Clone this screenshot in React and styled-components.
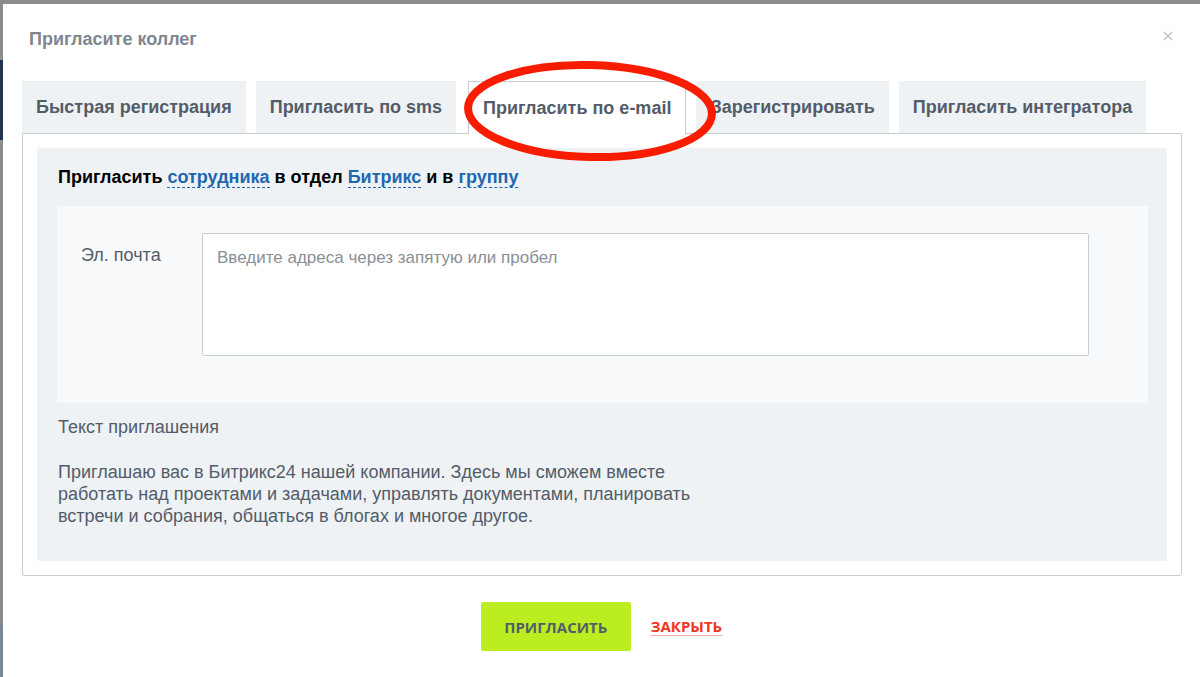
import React, { useState } from "react";
import styled, { createGlobalStyle } from "styled-components";

const GlobalStyle = createGlobalStyle`
  html, body {
    margin: 0;
    padding: 0;
    height: 100%;
    overflow: hidden;
  }
  body {
    font-family: "Liberation Sans", Arial, sans-serif;
    background: #8c8c8c;
  }
  #root {
    height: 100%;
  }
`;

const Backdrop = styled.div`
  display: flex;
  height: 677px;
  padding-top: 4px;
  box-sizing: border-box;
  background: #8c8c8c;
`;

const Edge = styled.div`
  display: flex;
  flex-direction: column;
  width: 3px;
  flex-shrink: 0;
`;

const EdgePart = styled.div`
  height: ${(p) => p.h}px;
  flex: ${(p) => (p.h ? "none" : "1")};
  background: ${(p) => p.color};
`;

const Modal = styled.div`
  position: relative;
  flex: 1;
  background: #fff;
  display: flex;
  flex-direction: column;
`;

const Header = styled.div`
  display: flex;
  align-items: center;
  justify-content: space-between;
  height: 77px;
  padding: 0 26px 6px 26px;
  box-sizing: border-box;
`;

const Title = styled.div`
  font-size: 18px;
  font-weight: bold;
  color: #80868e;
`;

const CloseX = styled.button`
  border: 0;
  background: none;
  padding: 0;
  width: 12px;
  height: 12px;
  margin-top: -8px;
  display: flex;
  cursor: pointer;
`;

const Tabs = styled.div`
  display: flex;
  gap: 10px;
  padding-left: 19px;
  height: 52px;
  position: relative;
  z-index: 1;
`;

const Tab = styled.div`
  display: flex;
  align-items: center;
  padding: 0 14px;
  box-sizing: border-box;
  height: ${(p) => (p.active ? "53px" : "52px")};
  font-size: 18px;
  font-weight: bold;
  color: #535c69;
  white-space: nowrap;
  background: ${(p) => (p.active ? "#fff" : "#eef2f4")};
  border: ${(p) => (p.active ? "1px solid #c6cdd3" : "none")};
  border-bottom: none;
  margin: ${(p) => (p.active ? "0 0 0 2px" : "0")};
  cursor: pointer;
`;

const ContentBox = styled.div`
  margin: 0 18px 0 19px;
  border: 1px solid #c6cdd3;
  border-radius: 0 0 2px 2px;
  padding: 14px;
`;

const Panel = styled.div`
  background: #eef2f4;
  border-radius: 2px;
  padding: 17px 19px 34px 20px;
`;

const Lead = styled.div`
  font-size: 18px;
  font-weight: bold;
  line-height: 24px;
  color: #000;
  padding-left: 1px;
  margin-bottom: 17px;
`;

const DashLink = styled.a`
  color: #2067b0;
  text-decoration: none;
  border-bottom: 1px dashed #2067b0;
  cursor: pointer;
`;

const FieldBox = styled.div`
  display: flex;
  background: #f8f9fa;
  padding: 27px 59px 47px 24px;
`;

const FieldLabel = styled.div`
  width: 121px;
  flex-shrink: 0;
  font-size: 18px;
  line-height: 20px;
  color: #535c69;
  margin-top: 12px;
`;

const Area = styled.textarea`
  flex: 1;
  height: 123px;
  box-sizing: border-box;
  border: 1px solid #c6cdd3;
  border-radius: 2px;
  padding: 14px 14px;
  font-family: "Liberation Sans", Arial, sans-serif;
  font-size: 17px;
  line-height: 20px;
  color: #333;
  resize: none;
  outline: none;
  background: #fff;
  &::placeholder {
    color: #8a8f94;
  }
`;

const Caption = styled.div`
  margin-top: 14px;
  padding-left: 1px;
  font-size: 18px;
  line-height: 20px;
  color: #535c69;
`;

const Message = styled.div`
  margin-top: 24px;
  padding-left: 1px;
  width: 660px;
  font-size: 18px;
  line-height: 22px;
  color: #535c69;
`;

const Footer = styled.div`
  display: flex;
  justify-content: center;
  align-items: center;
  gap: 20px;
  padding-top: 26px;
`;

const InviteButton = styled.button`
  width: 150px;
  height: 49px;
  border: 0;
  border-radius: 2px;
  background: #bbed21;
  color: #535c69;
  font-family: "Open Sans", sans-serif;
  font-weight: bold;
  font-size: 15px;
  text-transform: uppercase;
  cursor: pointer;
`;

const CloseLink = styled.a`
  font-family: "Open Sans", sans-serif;
  font-weight: bold;
  font-size: 15px;
  color: #f2361d;
  text-transform: uppercase;
  border-bottom: 1px solid #f7a79b;
  line-height: 18px;
  cursor: pointer;
`;

const Mark = styled.svg`
  position: absolute;
  left: 455px;
  top: 52px;
  z-index: 2;
  pointer-events: none;
`;

const tabs = [
  "Быстрая регистрация",
  "Пригласить по sms",
  "Пригласить по e-mail",
  "Зарегистрировать",
  "Пригласить интегратора",
];

export default function App() {
  const [active, setActive] = useState(2);

  return (
    <>
      <GlobalStyle />
      <Backdrop>
        <Edge>
          <EdgePart h={56} color="#8c8c8c" />
          <EdgePart h={80} color="#23324f" />
          <EdgePart h={485} color="#8c8c8c" />
          <EdgePart color="#7a8796" />
        </Edge>
        <Modal>
          <Header>
            <Title>Пригласите коллег</Title>
            <CloseX aria-label="close">
              <svg width="12" height="12" viewBox="0 0 12 12">
                <path
                  d="M2 2 L10 10 M10 2 L2 10"
                  stroke="#c3c6c9"
                  strokeWidth="1.6"
                />
              </svg>
            </CloseX>
          </Header>
          <Tabs>
            {tabs.map((t, i) => (
              <Tab key={t} active={i === active} onClick={() => setActive(i)}>
                {t}
              </Tab>
            ))}
          </Tabs>
          <ContentBox>
            <Panel>
              <Lead>
                Пригласить <DashLink>сотрудника</DashLink> в отдел{" "}
                <DashLink>Битрикс</DashLink> и в <DashLink>группу</DashLink>
              </Lead>
              <FieldBox>
                <FieldLabel>Эл. почта</FieldLabel>
                <Area placeholder="Введите адреса через запятую или пробел" />
              </FieldBox>
              <Caption>Текст приглашения</Caption>
              <Message>
                Приглашаю вас в Битрикс24 нашей компании. Здесь мы сможем вместе
                работать над проектами и задачами, управлять документами,
                планировать встречи и собрания, общаться в блогах и многое
                другое.
              </Message>
            </Panel>
          </ContentBox>
          <Footer>
            <InviteButton>Пригласить</InviteButton>
            <CloseLink>Закрыть</CloseLink>
          </Footer>
          <Mark width="264" height="112" viewBox="0 0 264 112">
            <ellipse
              cx="132"
              cy="55"
              rx="122"
              ry="46"
              fill="none"
              stroke="#f81d00"
              strokeWidth="8"
              transform="rotate(1.5 132 55)"
            />
          </Mark>
        </Modal>
      </Backdrop>
    </>
  );
}
